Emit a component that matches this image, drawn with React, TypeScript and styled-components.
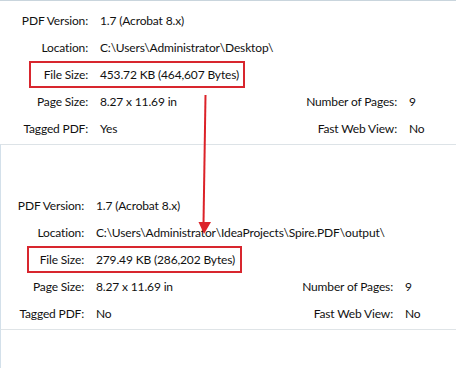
import React from "react";
import styled, { createGlobalStyle } from "styled-components";

const Global = createGlobalStyle`
  html, body { margin: 0; padding: 0; background: #fff; }
  body { font-family: Lato, "Noto Sans", sans-serif; }
`;

const Page = styled.div`
  position: relative;
  width: 456px;
  height: 368px;
  overflow: hidden;
  background: #ffffff;
  display: flex;
  flex-direction: column;
`;

const Panel = styled.section<{ $padTop: number; $padLeft: number; $framed?: boolean }>`
  box-sizing: border-box;
  display: flex;
  flex-direction: column;
  padding: ${(p) => p.$padTop}px 0 2px ${(p) => p.$padLeft}px;
  border-top: 1px solid ${(p) => (p.$framed ? "#dde3e7" : "#c9d5dd")};
  border-left: ${(p) => (p.$framed ? "1px solid #d3e0ea" : "none")};
  border-bottom: ${(p) => (p.$framed ? "1px solid #dfe4e7" : "none")};
`;

const Tail = styled.div`
  flex: 1;
  border-left: 1px solid #d3e0ea;
`;

const Row = styled.div`
  display: grid;
  grid-template-columns: 83px 185px 100px auto;
  column-gap: 12px;
  align-items: center;
  height: 27px;
  font-size: 12px;
  letter-spacing: -0.15px;
  color: #111;
  white-space: nowrap;
`;

const HighlightRow = styled(Row)<{ $left: number; $width: number }>`
  position: relative;
  &::after {
    content: "";
    position: absolute;
    box-sizing: border-box;
    top: 0;
    bottom: 0;
    left: ${(p) => p.$left}px;
    width: ${(p) => p.$width}px;
    border: 2px solid #d8262e;
  }
`;

const Label = styled.span`
  text-align: right;
`;

const Value = styled.span`
  text-align: left;
`;

const Arrow = styled.svg`
  position: absolute;
  left: 0;
  top: 0;
  pointer-events: none;
`;

type Info = {
  location: string;
  size: string;
  tagged: string;
};

function Properties({ info, padTop, padLeft, boxLeft, boxWidth, framed }: {
  info: Info; padTop: number; padLeft: number; boxLeft: number; boxWidth: number; framed?: boolean;
}) {
  return (
    <Panel $padTop={padTop} $padLeft={padLeft} $framed={framed}>
      <Row>
        <Label>PDF Version:</Label>
        <Value>1.7 (Acrobat 8.x)</Value>
      </Row>
      <Row>
        <Label>Location:</Label>
        <Value>{info.location}</Value>
      </Row>
      <HighlightRow $left={boxLeft} $width={boxWidth}>
        <Label>File Size:</Label>
        <Value>{info.size}</Value>
      </HighlightRow>
      <Row>
        <Label>Page Size:</Label>
        <Value>8.27 x 11.69 in</Value>
        <Label>Number of Pages:</Label>
        <Value>9</Value>
      </Row>
      <Row>
        <Label>Tagged PDF:</Label>
        <Value>{info.tagged}</Value>
        <Label>Fast Web View:</Label>
        <Value>No</Value>
      </Row>
    </Panel>
  );
}

export default function App() {
  return (
    <>
      <Global />
      <Page>
        <Properties
          info={{ location: "C:\\Users\\Administrator\\Desktop\\", size: "453.72 KB (464,607 Bytes)", tagged: "Yes" }}
          padTop={6}
          padLeft={5}
          boxLeft={24}
          boxWidth={216}
        />
        <Properties
          info={{ location: "C:\\Users\\Administrator\\IdeaProjects\\Spire.PDF\\output\\", size: "279.49 KB (286,202 Bytes)", tagged: "No" }}
          padTop={47}
          padLeft={0}
          boxLeft={26}
          boxWidth={215}
          framed
        />
        <Tail />
        <Arrow width="456" height="368" viewBox="0 0 456 368">
          <line x1="205.5" y1="95" x2="203.5" y2="224" stroke="#dc2229" strokeWidth="2" />
          <polygon points="198.5,222 211,222 204,234" fill="#dc2229" />
        </Arrow>
      </Page>
    </>
  );
}
